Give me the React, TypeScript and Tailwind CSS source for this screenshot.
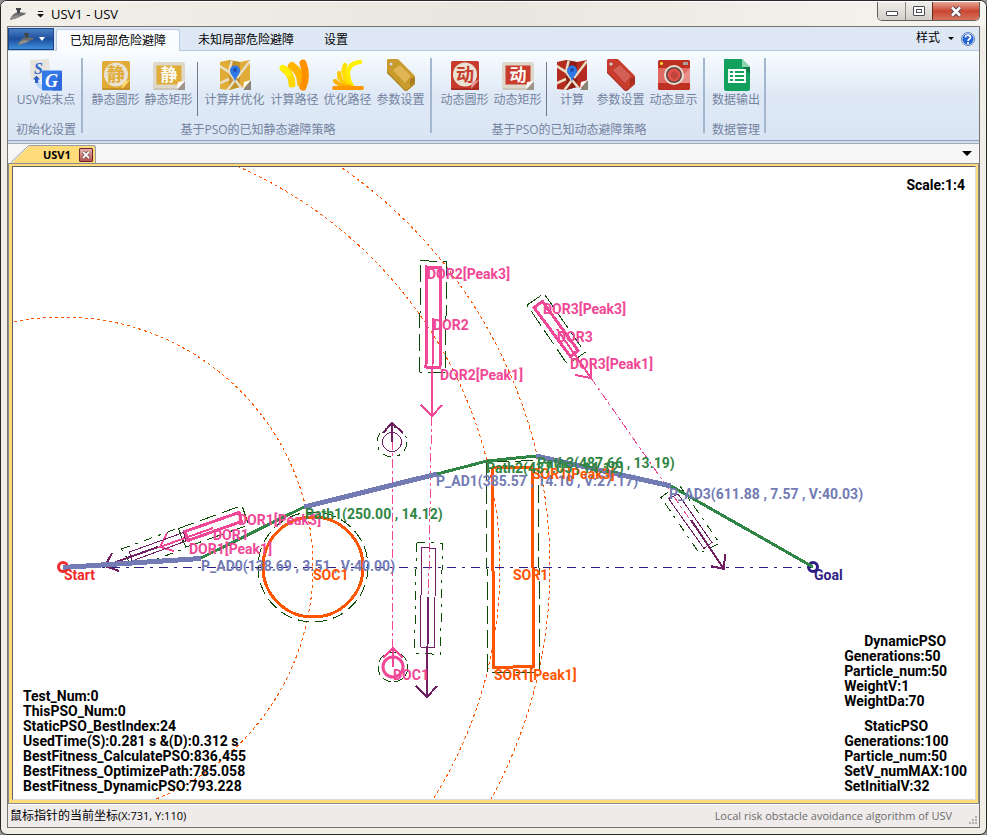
import type { ReactNode } from "react";
import clsx from "clsx";

type IconProps = { id: string; fill: string; dark: string; light: string };

const gold = { fill: "#e0ab36", dark: "#c4922a", light: "#e3b952" };
const red = { fill: "#c83c2e", dark: "#a82c20", light: "#d25f58" };

function StartGoalIcon() {
  return (
    <svg width="32" height="32" viewBox="0 0 32 32">
      <path d="M0 1l19-1 1 19-19 1z" fill="#e6e4dc" />
      <path d="M9 19c0 6 3 9 9 8l-2 4C9 31 5 26 5 20z" fill="#b9d4f8" />
      <path d="M6.500 16.500L10 20.500H8V24H5V20.500H3z" fill="#2a5fc4" />
      <rect x="12" y="11.500" width="20" height="20" rx="1" fill="#3478e8" />
      <path d="M32 11.500v20H22z" fill="#2c68d8" />
      <text x="4" y="15" fontFamily="Liberation Serif, serif" fontSize="16" fontStyle="italic" fontWeight="bold" fill="#2f6ad0">
        S
      </text>
      <text x="15" y="28" fontFamily="Liberation Serif, serif" fontSize="18" fontStyle="italic" fontWeight="bold" fill="#fff">
        G
      </text>
    </svg>
  );
}

function RoundGlyphIcon({ glyph, tone }: { glyph: string; tone: typeof gold }) {
  return (
    <svg width="32" height="32" viewBox="0 0 32 32">
      <rect x="2" y="2" width="28" height="29" rx="1.500" fill={tone.fill} />
      <path d="M2 29h28v1a1 1 0 0 1-1 1H3a1 1 0 0 1-1-1z" fill={tone.dark} />
      <circle cx="16" cy="15.500" r="12" fill="#e9e3d3" />
      <text x="16" y="22" textAnchor="middle" fontFamily="Noto Sans CJK SC, sans-serif" fontSize="18" fontWeight="bold" fill={tone.fill}>
        {glyph}
      </text>
      <path d="M30 21v10h-8z" fill={tone.dark} opacity=".7" />
      <path d="M22 30l1-7 7-2z" fill={tone === gold ? "#fbdc6f" : "#e59b96"} />
    </svg>
  );
}

function FrameGlyphIcon({ glyph, tone }: { glyph: string; tone: typeof gold }) {
  return (
    <svg width="32" height="32" viewBox="0 0 32 32">
      <rect x="0" y="3" width="32" height="28" rx="2" fill="#ddd8ca" />
      <path d="M1 29.500h30v1H1z" fill="#b9b5a8" />
      <rect x="3.500" y="6.500" width="25" height="19" fill={tone.fill} />
      <text x="16" y="22" textAnchor="middle" fontFamily="Noto Sans CJK SC, sans-serif" fontSize="17" fontWeight="bold" fill="#fbfaf4">
        {glyph}
      </text>
      <path d="M32 22v9h-8z" fill="#9b978c" />
      <path d="M24 30l1-7 7-1z" fill="#fff" />
    </svg>
  );
}

function MapIcon({ id, fill, dark }: IconProps) {
  return (
    <svg width="32" height="32" viewBox="0 0 32 32">
      <defs>
        <clipPath id={id}>
          <path d="M1 3l9-2 11 2 10-2v29l-10-2-11 3-9-1z" />
        </clipPath>
      </defs>
      <g clipPath={`url(#${id})`}>
        <rect width="32" height="32" fill={fill} />
        <path d="M10 0l11 3v26l-11 3z" fill={dark} />
        <path d="M-1 6l11 7 6 8-9 12M16 21l9 11M31 2L18 19M10 13L13 0M-1 25l11-5" stroke="#e9dfc6" strokeWidth="2.500" fill="none" />
      </g>
      <path d="M16 24c0-6-5-8-5-12.500a5 5 0 0 1 10 0C21 16 16 18 16 24z" fill="#2f78e6" />
      <circle cx="16" cy="11" r="2" fill="#1a4fae" />
      <path d="M32 21v10h-8z" fill="#8a8577" />
      <path d="M24 30l1-7 7-2z" fill="#fff" />
    </svg>
  );
}

function PathIcon() {
  return (
    <svg width="32" height="32" viewBox="0 0 32 32" fill="none" strokeLinecap="round">
      <path d="M13 7c6 4 9 10 9 17" stroke="#ffb400" strokeWidth="8" />
      <path d="M5 10c4 2 8 8 8 15" stroke="#ffd800" strokeWidth="7" />
      <path d="M3.500 9c2 1 4 3 6 6" stroke="#fff000" strokeWidth="6" />
      <path d="M24 4c3 8 3 17 0 24" stroke="#ff9100" strokeWidth="7" />
    </svg>
  );
}

function OptimizeIcon() {
  return (
    <svg width="32" height="32" viewBox="0 0 32 32" fill="none" strokeLinecap="round">
      <path d="M12 28L3 22l4-8 5-7 6 2-2 10z" fill="#ffd21c" opacity=".35" />
      <path d="M28 3c-12 1-16 11-8 25" stroke="#fff000" strokeWidth="4.500" />
      <path d="M13 6c-3 8 0 16 8 22" stroke="#ffe000" strokeWidth="4.500" />
      <path d="M7 14c0 6 4 11 12 14" stroke="#ffc800" strokeWidth="4" />
      <path d="M3 22c2 3 8 5 15 6" stroke="#ffb000" strokeWidth="4" />
      <path d="M2 29h28" stroke="#ff9800" strokeWidth="4" />
    </svg>
  );
}

function TagIcon({ fill, dark, light }: IconProps) {
  return (
    <svg width="32" height="32" viewBox="0 0 32 32">
      <path d="M3 0h9q1 0 2 1l15 15q1 1 1 2v7l-7 6q-2 1-4 0L2 13V1z" fill={fill} />
      <path d="M2 12l17 18q2 1 4 0l7-6v1l-7 6q-2 2-4 0L2 14z" fill={dark} />
      <path d="M8 11l7-5 11 11-6 7z" fill={light} />
      <path d="M30 18v5l-5 4v-7z" fill={dark} />
      <circle cx="6" cy="5" r="1.500" fill="#cfdcea" />
    </svg>
  );
}

function CameraIcon() {
  return (
    <svg width="32" height="32" viewBox="0 0 32 32">
      <rect y="1" width="32" height="30" rx="1.500" fill="#be3021" />
      <path d="M0 9h32v15H0z" fill="#e06a62" />
      <path d="M32 9v15H18z" fill="#e98f89" />
      <circle cx="3.500" cy="4.500" r="1.500" fill="#ffee22" />
      <rect x="25" y="3" width="5" height="3" fill="#aaa39b" />
      <circle cx="16" cy="16" r="10" fill="#e8e0d4" />
      <circle cx="16" cy="16" r="8" fill="#5e4844" />
      <circle cx="16" cy="16" r="6.500" fill="#e2524a" />
      <path d="M16 12l4 2v4l-4 3-3-3v-4z" fill="#c0443c" />
    </svg>
  );
}

function SheetIcon() {
  return (
    <svg width="32" height="32" viewBox="0 0 32 32">
      <path d="M4 0h18l8 8v22a2 2 0 0 1-2 2H6a2 2 0 0 1-2-2z" fill="#12a05c" />
      <path d="M23 8h7v7z" fill="#0b7a44" />
      <path d="M22 0l8 8h-8z" fill="#8fd4b0" />
      <path d="M9 11h16v12H9zM9 15h16M9 19h16M14 11v12" fill="none" stroke="#fff" strokeWidth="1.800" />
    </svg>
  );
}

function ShipIcon() {
  return (
    <svg width="18" height="14" viewBox="0 0 18 14">
      <path d="M1 13C2 9 5 6 9 5l8 1c-1 2-3 2-5 3-3 2-7 3-11 4z" fill="#6b6c6d" />
      <path d="M3 10c3-2 6-2 9-1l-4 2-7 2z" fill="#8f8f8e" />
      <path d="M7 1h5v2h-1v3H8V3H7z" fill="#45484b" />
    </svg>
  );
}

function Item({ icon, label, className }: { icon: ReactNode; label: string; className: string }) {
  return (
    <button type="button" className={clsx("flex flex-col items-center gap-px whitespace-nowrap leading-4", className)}>
      {icon}
      {label}
    </button>
  );
}

function Group({ title, children }: { title: string; children: ReactNode }) {
  return (
    <section className="my-[7px] flex flex-col justify-between border-r-2 border-[#a3b7cf] pl-[6px] pr-[3px] text-[#74839f]">
      <div className="flex pt-px">{children}</div>
      <h2 className="-mb-[5px] text-center leading-4">{title}</h2>
    </section>
  );
}

function Divider() {
  return <div className="ml-[2px] mr-[3px] mt-[3px] h-[54px] w-px shrink-0 bg-[#6f7c8d]" />;
}

const labels: [string, number, number, string][] = [
  ["DOR2[Peak3]", 427, 279, "#f04896"],
  ["DOR2", 433, 330, "#f04896"],
  ["DOR2[Peak1]", 440, 380, "#f04896"],
  ["DOR3[Peak3]", 543, 314, "#f04896"],
  ["DOR3", 557, 342, "#f04896"],
  ["DOR3[Peak1]", 570, 369, "#f04896"],
  ["DOR1[Peak3]", 238, 525, "#f04896"],
  ["DOR1", 213, 540, "#f04896"],
  ["DOR1[Peak1]", 189, 554, "#f04896"],
  ["DOC1", 393, 680, "#f04896"],
  ["P_AD0(138.69 , 3.51 , V:40.00)", 201, 571, "#727bb4"],
  ["P_AD1(385.57 , 14.10 , V:27.17)", 436, 486, "#727bb4"],
  ["P_AD3(611.88 , 7.57 , V:40.03)", 669, 499, "#727bb4"],
  ["SOC1", 313, 580, "#ff5500"],
  ["SOR1", 513, 580, "#ff5500"],
  ["SOR1[Peak1]", 494, 680, "#ff5500"],
  ["SOR1[Peak3]", 532, 479, "#ff5500"],
  ["Path1(250.00 , 14.12)", 305, 519, "#308544"],
  ["Path2(437.05 , 14.12)", 486, 473, "#308544"],
  ["Path3(487.66 , 13.19)", 537, 468, "#308544"],
  ["Start", 64, 580, "#f02b2b"],
  ["Goal", 814, 580, "#2d1d85"],
];

function Chart() {
  return (
    <svg className="absolute inset-0 h-full w-full" fill="none">
      {/* map coordinates are window coordinates, the panel starts at 13,167 */}
      <g transform="translate(-13 -167)" shapeRendering="crispEdges">
        <g stroke="#ff5500" strokeDasharray="3 3">
          <circle cx="63" cy="567" r="250" />
          <circle cx="63" cy="567" r="437" />
          <circle cx="63" cy="567" r="487" />
        </g>
        <path d="M63 567.500H813" stroke="#2d1d85" strokeDasharray="9 6 3 6" />

        {/* static obstacles */}
        <g stroke="#ff5500" strokeWidth="3">
          <circle cx="313" cy="567" r="50" />
          <path d="M492.500 468L493.500 667.500L533.500 666.500L532.500 467Z" />
        </g>
        <g stroke="#0c4a05" strokeDasharray="18 6">
          <circle cx="313" cy="567" r="55" strokeDasharray="12 6" />
          <path d="M486.500 462L487.500 673L539.500 672L538.500 460.500Z" />
        </g>

        {/* dynamic obstacles, current position */}
        <g stroke="#0c4a05" strokeDasharray="17 6">
          <path d="M420.500 260.500L446.500 262L445.500 373L419.500 372Z" />
          <path d="M527 305L544 293.500L585 352.500L567.500 364.500Z" />
          <path d="M178.500 528.500L242 505.500L248.500 525L185 547.500Z" />
          <circle cx="393" cy="667" r="15" strokeDasharray="9 4" />
        </g>
        <g stroke="#0c4a05" strokeDasharray="9 6 3 6">
          <path d="M416.500 542L442.500 543.500L440.500 654.500L414.500 653Z" />
          <path d="M661 497.500L678.500 484L719.500 543L699.500 553.500Z" />
          <path d="M121.500 549L178.500 528L186 548L133 568Z" />
          <circle cx="392" cy="442" r="15" />
        </g>
        <g stroke="#f04896" strokeDasharray="9 3 3 3">
          <path d="M431.500 417L428.500 600M392.500 423V667M591 378L691 521M160 547L105 566" />
        </g>
        <g stroke="#f04896" strokeWidth="3">
          <path d="M427 267L441 267.500L440 367.500L426 367Z" />
          <path d="M534 307.500L542.500 301.500L578 350.500L570.500 356.500Z" />
          <path d="M185 531.500L239 512.500L241.500 521.500L188 540.500Z" />
          <circle cx="393" cy="667" r="10" shapeRendering="auto" />
        </g>
        <g stroke="#f04896" strokeWidth="2">
          <path d="M433 318L432 416M421 405L432 416L442 405" />
          <path d="M557 329L591 378M591 362V378L575 375" />
          <path d="M213 528L160 547M167 533L160 547L174 551" />
          <path d="M393 667V648M383 658L393 648L403 658" />
        </g>

        {/* dynamic obstacles, predicted position */}
        <g stroke="#6f1f62">
          <path d="M421.500 547.500L435.500 548.500L434.500 648L420.500 647Z" />
          <path d="M668.500 498.500L678 494L712 542.500L704 548.500Z" />
          <path d="M129.500 552L183.500 532.500L186 541L132 561Z" />
          <circle cx="392" cy="442" r="9.500" />
        </g>
        <g stroke="#6f1f62" strokeWidth="2">
          <path d="M428 597L427 697M416 686L427 697L437 686" />
          <path d="M691 520L724 569M725 554L724 569L711 566" />
          <path d="M158 547L105 566M112 553L105 566L119 571" />
          <path d="M392 442V423M383 433L392 423L403 433" />
        </g>

        {/* planned path */}
        <g strokeWidth="3" shapeRendering="auto">
          <circle cx="63" cy="567" r="4.500" stroke="#f02b2b" />
          <circle cx="813" cy="567" r="4.500" stroke="#2d1d85" />
        </g>
        <g stroke="#308544" strokeWidth="3">
          <path d="M201 558L304 507M437 474L487 461L536 456M671 486L813 567" />
        </g>
        <g stroke="#727bb4" strokeWidth="5">
          <path d="M63 567.500L201 558.500M304 507L437 474M536 456L671 486" />
        </g>

        <g fontFamily="Roboto, sans-serif" fontSize="14" fontWeight="bold">
          {labels.map(([text, x, y, fill]) => (
            <text key={text} x={x} y={y} fill={fill}>
              {text}
            </text>
          ))}
        </g>
      </g>
    </svg>
  );
}

export default function App() {
  return (
    <div className="min-h-screen bg-[#8d8f8c]">
      <div className="flex min-h-screen flex-col rounded-[7px] border border-[#2b2728] bg-[#f1eee7] px-[6px] pb-[6px] font-['Open_Sans','Noto_Sans_CJK_SC',sans-serif] text-xs text-black">
        {/* Title bar */}
        <header className="-mx-[6px] flex h-[25px] items-center rounded-t-[6px] border-t border-white bg-linear-to-r from-[#f3f0ea] via-[#e9e6df] to-[#f6f5f0] pl-2 pr-[6px]">
          <ShipIcon />
          <svg width="7" height="8" viewBox="0 0 7 8" className="ml-[10px] mr-[7px]">
            <path d="M1 1h5v1H1zM0 4h7L3.500 7.500z" fill="#111" />
          </svg>
          <h1 className="flex-1 pt-px text-[13px]">USV1 - USV</h1>
          <div className="flex h-[19px] self-start overflow-hidden rounded-b-[5px] border border-t-0 border-[#625f5c]">
            <button type="button" aria-label="Minimize" className="flex w-7 items-center justify-center border-r border-[#8b8884] bg-linear-to-b from-[#f0eeea] to-[#d2cfc9]">
              <span className="mt-1 h-[5px] w-3 rounded-[1px] border border-[#4b4d57] bg-white" />
            </button>
            <button type="button" aria-label="Maximize" className="flex w-[27px] items-center justify-center border-r border-[#6b2a20] bg-linear-to-b from-[#f0eeea] to-[#d2cfc9]">
              <span className="flex h-[10px] w-3 items-center justify-center rounded-[1px] border border-[#4b4d57] bg-white">
                <span className="h-1 w-[6px] border border-[#4b4d57]" />
              </span>
            </button>
            <button type="button" aria-label="Close" className="flex w-[46px] items-center justify-center bg-linear-to-b from-[#e5a596] via-[#cb4530] to-[#d2735c]">
              <svg width="12" height="11" viewBox="0 0 12 11">
                <path d="M2 1.500l8 8M10 1.500l-8 8" stroke="#4c4a55" strokeWidth="4.500" />
                <path d="M2 1.500l8 8M10 1.500l-8 8" stroke="#fff" strokeWidth="2.500" />
              </svg>
            </button>
          </div>
        </header>

        <div className="flex flex-1 flex-col border border-[#77736f]">
          {/* Ribbon tabs */}
          <nav className="flex h-6 border-b border-[#b9cde0] bg-[#dee8f5]">
            <button type="button" aria-label="Menu" className="mt-px flex w-[46px] items-center justify-center gap-1 border border-[#1d4587] bg-linear-to-b from-[#4a7fc4] via-[#1d4f9e] to-[#3f8fdc]">
              <ShipIcon />
              <span className="border-x-[3px] border-t-[4px] border-x-transparent border-t-white" />
            </button>
            <button type="button" className="-mb-px ml-[2px] mt-[2px] w-[124px] rounded-t-[3px] border border-b-0 border-[#b9cde0] bg-[#fafcff] leading-4">
              已知局部危险避障
            </button>
            <button type="button" className="ml-[18px] pt-px leading-6">未知局部危险避障</button>
            <button type="button" className="ml-[30px] mr-auto pt-px leading-6">设置</button>
            <button type="button" className="flex items-center gap-2 pb-px">
              样式
              <span className="border-x-[3px] border-t-[3px] border-x-transparent border-t-black" />
            </button>
            <button type="button" aria-label="Help" className="ml-[7px] mr-1 self-center">
              <svg width="14" height="14" viewBox="0 0 14 14">
                <circle cx="7" cy="7" r="6.500" fill="#eef5ff" stroke="#5c7fb8" />
                <circle cx="7" cy="7" r="5.500" fill="#2263d2" />
                <path d="M4.500 5.500c0-3.500 5-3 5 0C9.500 7 7 7 7 9M7 10v2" fill="none" stroke="#fff" strokeWidth="1.700" />
              </svg>
            </button>
          </nav>

          {/* Ribbon */}
          <div className="flex h-[89px] bg-linear-to-b from-[#f8fcff] via-[#dfe9f6] to-[#dae5f4]">
            <Group title="初始化设置">
              <Item className="w-16" icon={<StartGoalIcon />} label="USV始末点" />
            </Group>
            <Group title="基于PSO的已知静态避障策略">
              <Item className="w-[53px]" icon={<RoundGlyphIcon glyph="静" tone={gold} />} label="静态圆形" />
              <Item className="w-[53px]" icon={<FrameGlyphIcon glyph="静" tone={gold} />} label="静态矩形" />
              <Divider />
              <Item className="w-[67px]" icon={<MapIcon id="map-static" {...gold} />} label="计算并优化" />
              <Item className="w-[53px]" icon={<PathIcon />} label="计算路径" />
              <Item className="w-[53px]" icon={<OptimizeIcon />} label="优化路径" />
              <Item className="w-[53px]" icon={<TagIcon id="tag-static" fill="#c99a2c" dark="#a77d1f" light="#dfb653" />} label="参数设置" />
            </Group>
            <Group title="基于PSO的已知动态避障策略">
              <Item className="w-[53px]" icon={<RoundGlyphIcon glyph="动" tone={red} />} label="动态圆形" />
              <Item className="w-[53px]" icon={<FrameGlyphIcon glyph="动" tone={red} />} label="动态矩形" />
              <Divider />
              <Item className="w-11" icon={<MapIcon id="map-dynamic" fill="#b42c1f" dark="#8e2018" light="#d25f58" />} label="计算" />
              <Item className="w-[53px]" icon={<TagIcon id="tag-dynamic" {...red} />} label="参数设置" />
              <Item className="w-[53px]" icon={<CameraIcon />} label="动态显示" />
            </Group>
            <Group title="数据管理">
              <Item className="w-[50px]" icon={<SheetIcon />} label="数据输出" />
            </Group>
          </div>
          <div className="h-1 border-y border-t-[#8fa3bd] border-b-[#a3adba] bg-[#d0ddec]" />

          {/* Document tabs */}
          <div className="flex h-[19px] items-end bg-[#f6f6f6] pl-[3px] pr-[7px]">
            <div className="flex h-[18px]">
              <svg width="20" height="18" viewBox="0 0 20 18">
                <path d="M1 18L17 2q1-1 3-1v17z" fill="#ffdb7a" />
                <path d="M0 17.500L16.500 1.500Q17.500.500 20 .500" fill="none" stroke="#9a9da3" />
              </svg>
              <div className="flex items-center gap-2 rounded-tr-[3px] border-r border-t border-[#9a9da3] bg-[#ffdb7a] pl-3 pr-[2px]">
                <button type="button" className="text-[11px] font-bold leading-4">USV1</button>
                <button type="button" aria-label="Close document" className="flex h-[14px] w-[14px] items-center justify-center rounded-[1px] border border-[#6b2331] bg-linear-to-b from-[#e3b0aa] to-[#b5524f]">
                  <svg width="8" height="8" viewBox="0 0 8 8">
                    <path d="M1 1l6 6M7 1L1 7" stroke="#5a3038" strokeWidth="3" />
                    <path d="M1 1l6 6M7 1L1 7" stroke="#fff" strokeWidth="1.800" />
                  </svg>
                </button>
              </div>
            </div>
            <button type="button" aria-label="Documents" className="mb-[7px] ml-auto">
              <span className="block border-x-[5px] border-t-[5px] border-x-transparent border-t-black" />
            </button>
          </div>

          {/* Map */}
          <main className="flex flex-1 flex-col border border-[#8a8c92] bg-[#ffdb7a] pb-[3px] pl-[3px] pr-[2px] pt-[2px]">
            <div className="relative flex flex-1 flex-col justify-between overflow-hidden border border-b-[#dcdcdc] border-l-[#5f5f5f] border-r-[#dcdcdc] border-t-[#5f5f5f] bg-white font-[Roboto,sans-serif] text-sm font-bold leading-[15px]">
              <Chart />
              <p className="relative pr-[10px] pt-[11px] text-right">Scale:1:4</p>
              <div className="relative flex items-end justify-between pb-[5px] pl-[10px] pr-2">
                <div>
                  <p>Test_Num:0</p>
                  <p>ThisPSO_Num:0</p>
                  <p>StaticPSO_BestIndex:24</p>
                  <p>UsedTime(S):0.281 s &amp;(D):0.312 s</p>
                  <p>BestFitness_CalculatePSO:836.455</p>
                  <p>BestFitness_OptimizePath:785.058</p>
                  <p>BestFitness_DynamicPSO:793.228</p>
                </div>
                <div>
                  <h3 className="pl-5">DynamicPSO</h3>
                  <p>Generations:50</p>
                  <p>Particle_num:50</p>
                  <p>WeightV:1</p>
                  <p>WeightDa:70</p>
                  <h3 className="pl-5 pt-[10px]">StaticPSO</h3>
                  <p>Generations:100</p>
                  <p>Particle_num:50</p>
                  <p>SetV_numMAX:100</p>
                  <p>SetInitialV:32</p>
                </div>
              </div>
            </div>
          </main>

          {/* Status bar */}
          <footer className="flex h-[23px] items-center border-t border-white bg-[#efebeb] pl-[2px] pr-[2px]">
            <span className="flex-1">
              鼠标指针的当前坐标<span className="text-[11px]">(X:731, Y:110)</span>
            </span>
            <span className="mr-4 text-[11px] text-[#6d6d6d]">Local risk obstacle avoidance algorithm of USV</span>
            <svg width="9" height="9" viewBox="0 0 9 9" fill="#b4b0ae" className="mt-2">
              <path d="M7 0h2v2H7zM7 3h2v2H7zM7 6h2v2H7zM4 3h2v2H4zM4 6h2v2H4zM1 6h2v2H1z" />
            </svg>
          </footer>
        </div>
      </div>
    </div>
  );
}
